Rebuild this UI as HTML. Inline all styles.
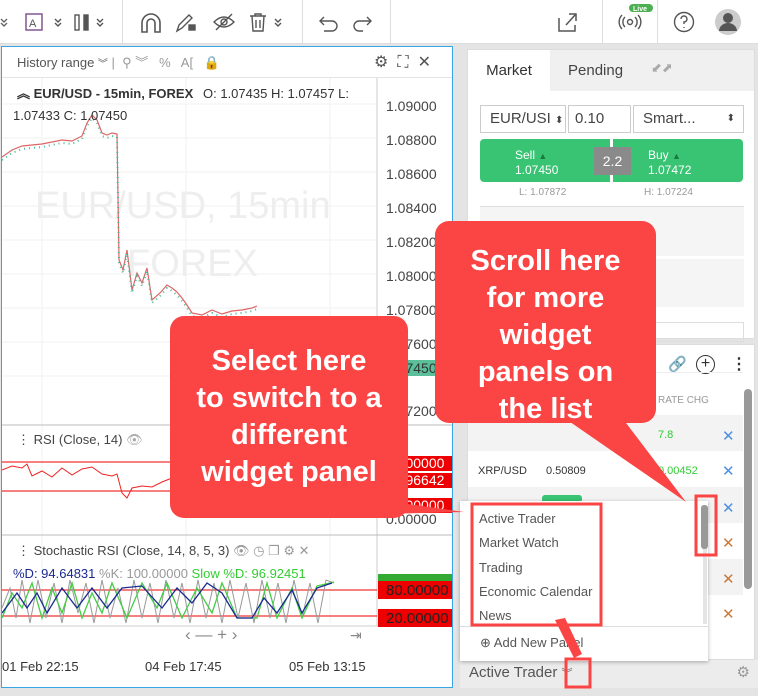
<!DOCTYPE html>
<html><head><meta charset="utf-8"><style>
*{box-sizing:border-box;margin:0;padding:0}
body{width:758px;height:696px;overflow:hidden;background:#e4e4e4;font-family:"Liberation Sans",sans-serif;position:relative;color:#333}
.abs{position:absolute}
.tb{left:0;top:0;width:758px;height:44px;background:#fff;border-bottom:1px solid #ddd}
.vd{position:absolute;top:0;width:1px;height:44px;background:#ddd}
.co{background:#fb4444;color:#fff;font-weight:bold;font-size:29px;line-height:37px;text-align:center;border-radius:14px}
.x{position:absolute;left:254px;font-size:15px}
</style></head><body>
<div class="abs tb">
 <div class="vd" style="left:122px"></div><div class="vd" style="left:302px"></div><div class="vd" style="left:390px"></div><div class="vd" style="left:602px"></div><div class="vd" style="left:657px"></div>
 <svg class="abs" style="left:0;top:0" width="758" height="44" fill="none" stroke="#555" stroke-width="1.4">
  <path d="M1 19l3 3 3-3M1 23l3 3 3-3" stroke="#666"/>
  <rect x="26" y="14" width="16" height="16" stroke="#7a4b8c"/><text x="29" y="27" font-size="11" fill="#555" stroke="none" font-family="Liberation Sans">A</text>
  <path d="M55 19l3 3 3-3M55 23l3 3 3-3"/>
  <rect x="75" y="15" width="4" height="15"/><rect x="84" y="15" width="4" height="15" fill="#555"/>
  <path d="M97 19l3 3 3-3M97 23l3 3 3-3"/>
  <path d="M142 32v-9a9 9 0 0 1 18 0v9h-5v-9a4 4 0 0 0-8 0v9z" stroke-width="1.6"/>
  <path d="M177 31l2-6 10-10 3 3-10 10z"/><rect x="189" y="25" width="6" height="5" fill="#555"/>
  <path d="M214 22q10-10 20 0q-10 10-20 0z"/><circle cx="224" cy="22" r="3"/><path d="M216 30l16-16"/>
  <path d="M250 16h16M255 16v-2h6v2M252 16l1 15h10l1-15M256 20v8M260 20v8"/>
  <path d="M275 19l3 3 3-3M275 23l3 3 3-3"/>
  <path d="M324 17l-4 4 4 4M320 21h12a5 5 0 0 1 0 10h-8"/>
  <path d="M367 17l4 4-4 4M371 21h-12a5 5 0 0 0 0 10h4"/>
  <path d="M559 18v13h16v-6M566 25l9-10M569 14h7v7" stroke-width="1.5"/>
  <circle cx="630" cy="22" r="2.5"/><path d="M625 17a7 7 0 0 0 0 10M635 17a7 7 0 0 1 0 10M622 15a10 10 0 0 0 0 14M638 15a10 10 0 0 1 0 14"/>
  <rect x="629" y="4" width="24" height="8" rx="4" fill="#4caf50" stroke="none"/><text x="633" y="11" font-size="7" font-weight="bold" fill="#fff" stroke="none" font-family="Liberation Sans">Live</text>
  <circle cx="684" cy="22" r="9.5"/><path d="M681 19a3 3 0 1 1 3 3v2M684 27v1"/>
  <circle cx="728" cy="22" r="13" fill="#ccc" stroke="none"/><circle cx="728" cy="18" r="5" fill="#555" stroke="none"/><path d="M719 31a9 8 0 0 1 18 0z" fill="#555" stroke="none"/>
 </svg>
</div>
<div class="abs" style="left:1px;top:46px;width:452px;height:642px;background:#fff;border:1px solid #3aa5e6">
 <div class="abs" style="left:0;top:0;width:450px;height:31px;border-bottom:1px solid #e4e4e4;font-size:13px;color:#555;line-height:31px;padding-left:15px">History range <span style="font-size:10px">︾</span><span style="color:#999">&nbsp;|&nbsp; ⚲ ︾ &nbsp; % &nbsp; A[ &nbsp; 🔒</span>
  <span class="abs" style="right:12px;top:0;font-size:16px;color:#555;letter-spacing:9px">⚙⛶✕</span></div>
</div>
<svg class="abs" style="left:2px;top:78px" width="450" height="600">
 <g stroke="#f2f2f2"><path d="M40 0v545M184 0v545M328 0v545M0 26h375M0 60h375M0 94h375M0 128h375M0 162h375M0 196h375M0 230h375M0 264h375M0 298h375"/></g>
 <path d="M375 0v548M0 548h450" stroke="#ccc"/>
 <path d="M0 347h450M0 457h450" stroke="#bbb"/>
 <text x="33" y="140" font-size="38" fill="#eee" font-family="Liberation Sans">EUR/USD, 15min</text>
 <text x="125" y="198" font-size="38" fill="#eee" font-family="Liberation Sans">FOREX</text>
 <polyline fill="none" stroke="#d66" stroke-width="1.2" points="0,79 10,72 20,68 30,67 40,66 50,64 60,62 70,63 80,58 85,45 90,37 95,42 100,55 105,57 110,55 115,56 117,182 121,192 125,172 130,212 135,195 140,205 145,190 150,222 158,215 165,207 170,210 175,214 180,220 185,227 190,235 200,237 210,232 220,236 230,233 240,232 250,230 255,228"/>
 <polyline fill="none" stroke="#4b9" stroke-width="2" stroke-dasharray="1 4" points="0,82 10,75 20,71 30,70 40,69 50,67 60,65 70,66 80,61 85,48 90,40 95,45 100,58 105,60 110,58 115,59 117,185 121,195 125,175 130,215 135,198 140,208 145,193 150,225 158,218 165,210 170,213 175,217 180,223 185,230 190,238 200,240 210,235 220,239 230,236 240,235 250,233 255,231"/>
 <text x="15" y="20" font-size="13" font-weight="bold" fill="#333" font-family="Liberation Sans">︽ EUR/USD - 15min, FOREX</text>
 <text x="201" y="20" font-size="13" fill="#333" font-family="Liberation Sans">O: 1.07435 H: 1.07457 L:</text>
 <text x="11" y="42" font-size="13" fill="#333" font-family="Liberation Sans">1.07433 C: 1.07450</text>
 <g font-size="14" fill="#444" font-family="Liberation Sans"><text x="384" y="33">1.09000</text><text x="384" y="67">1.08800</text><text x="384" y="101">1.08600</text><text x="384" y="135">1.08400</text><text x="384" y="169">1.08200</text><text x="384" y="203">1.08000</text><text x="384" y="237">1.07800</text><text x="384" y="271">1.07600</text><text x="384" y="338">1.07200</text></g>
 <rect x="376" y="282" width="74" height="16" fill="#5bbf9a"/><text x="384" y="295" font-size="14" fill="#333" font-family="Liberation Sans">1.07450</text>
 <text x="15" y="366" font-size="13" fill="#444" font-family="Liberation Sans">⋮  RSI (Close, 14)  <tspan fill="#aaa">👁</tspan></text>
 <path d="M0 384h375M0 413h375" stroke="#e00"/>
 <polyline fill="none" stroke="#e22" points="0,392 10,388 20,390 25,386 30,398 40,393 50,399 60,390 70,397 80,391 90,389 100,396 110,398 115,396 120,415 125,420 130,410 140,408 150,409 160,404 170,400"/>
 <rect x="376" y="378" width="74" height="15" fill="#e00"/><rect x="376" y="395" width="74" height="15" fill="#e00"/><rect x="376" y="420" width="74" height="15" fill="#e00"/>
 <text x="384" y="390" font-size="14" fill="#fff" font-family="Liberation Sans">80.00000</text><text x="384" y="407" font-size="14" fill="#fff" font-family="Liberation Sans">46.96642</text><text x="384" y="432" font-size="14" fill="#fff" font-family="Liberation Sans">20.00000</text>
 <text x="384" y="446" font-size="14" fill="#444" font-family="Liberation Sans">0.00000</text>
 <text x="15" y="477" font-size="13" fill="#444" font-family="Liberation Sans">⋮  Stochastic RSI (Close, 14, 8, 5, 3) <tspan fill="#999">👁 ◷ ❐ ⚙ ✕</tspan></text>
 <text x="11" y="500" font-size="13" fill="#1a2a90" font-family="Liberation Sans">%D: 94.64831 <tspan fill="#999">%K: 100.00000</tspan> <tspan fill="#3c3">Slow %D: 96.92451</tspan></text>
 <path d="M0 512h375M0 538h375" stroke="#e00"/>
 <polyline fill="none" stroke="#999" points="0,530 8,510 14,540 20,502 28,545 36,502 44,540 52,505 60,545 68,502 76,535 84,505 92,545 100,502 108,540 116,510 124,545 132,502 140,540 148,505 156,545 164,502 172,540 180,505 188,545 196,502 204,540 212,505 220,545 228,502 236,540 244,505 252,545 260,502 268,540 276,505 284,545 292,502 300,540 308,505 316,545 324,502 332,505"/>
 <polyline fill="none" stroke="#4c4" stroke-width="1.3" points="0,540 10,515 20,530 30,505 40,540 50,510 60,535 70,505 80,540 90,515 100,535 110,505 125,540 140,505 155,530 165,505 180,540 195,510 210,535 220,505 235,540 255,540 265,505 275,540 290,510 300,540 315,508 332,504"/>
 <polyline fill="none" stroke="#1a2a90" stroke-width="1.3" points="0,535 15,515 25,530 35,515 45,535 60,510 75,530 90,510 105,530 120,510 140,508 160,530 175,510 190,525 205,505 220,515 235,540 250,540 262,520 275,535 290,512 300,535 315,510 330,505"/>
 <rect x="376" y="496" width="74" height="10" fill="#3a3"/>
 <rect x="376" y="503" width="74" height="18" fill="#e00"/><rect x="376" y="531" width="74" height="18" fill="#e00"/>
 <text x="384" y="517" font-size="15" fill="#222" font-family="Liberation Sans">80.00000</text><text x="384" y="545" font-size="15" fill="#222" font-family="Liberation Sans">20.00000</text>
 <text x="183" y="562" font-size="17" fill="#888" font-family="Liberation Sans">‹  —  +  ›</text><text x="348" y="562" font-size="14" fill="#888" font-family="Liberation Sans">⇥</text>
 <text x="0" y="593" font-size="13" fill="#333" font-family="Liberation Sans">01 Feb 22:15</text><text x="143" y="593" font-size="13" fill="#333" font-family="Liberation Sans">04 Feb 17:45</text><text x="287" y="593" font-size="13" fill="#333" font-family="Liberation Sans">05 Feb 13:15</text>
</svg>
<div class="abs" style="left:467px;top:49px;width:288px;height:290px;background:#fff;border:1px solid #ddd">
 <div class="abs" style="left:0;top:0;width:286px;height:41px;background:#f0f0f0"></div>
 <div class="abs" style="left:0;top:0;width:82px;height:42px;background:#fff;font-size:15px;line-height:42px;text-align:center">Market</div>
 <div class="abs" style="left:100px;top:0;font-size:15px;line-height:42px;color:#444">Pending</div>
 <div class="abs" style="left:183px;top:10px;font-size:13px;color:#aaa">⬋⬈</div>
 <div class="abs" style="left:12px;top:55px;width:86px;height:28px;border:1px solid #ccc;font-size:15px;line-height:26px;padding-left:9px;color:#444">EUR/USI <span style="font-size:10px">⬍</span></div>
 <div class="abs" style="left:100px;top:55px;width:63px;height:28px;border:1px solid #ccc;font-size:15px;line-height:26px;padding-left:6px;color:#444">0.10</div>
 <div class="abs" style="left:165px;top:55px;width:111px;height:28px;border:1px solid #ccc;font-size:15px;line-height:26px;padding-left:9px;color:#444">Smart... <span style="float:right;padding-right:8px;font-size:10px">⬍</span></div>
 <div class="abs" style="left:12px;top:89px;width:130px;height:43px;background:#38c472;border-radius:4px 0 0 4px;color:#fff;font-size:12px;line-height:14px;padding:9px 0 0 35px">Sell <span style="color:#1d7a3f;font-size:9px">▲</span><br>1.07450</div>
 <div class="abs" style="left:145px;top:89px;width:130px;height:43px;background:#38c472;border-radius:0 4px 4px 0;color:#fff;font-size:12px;line-height:14px;padding:9px 0 0 35px">Buy <span style="color:#1d7a3f;font-size:9px">▲</span><br>1.07472</div>
 <div class="abs" style="left:126px;top:97px;width:37px;height:28px;background:#8a8a8a;color:#fff;font-size:14px;line-height:28px;text-align:center">2.2</div>
 <div class="abs" style="left:51px;top:137px;font-size:10px;color:#999">L: 1.07872</div>
 <div class="abs" style="left:176px;top:137px;font-size:10px;color:#999">H: 1.07224</div>
 <div class="abs" style="left:12px;top:156px;width:264px;height:50px;background:#f5f5f5;border-top:1px solid #ddd"></div>
 <div class="abs" style="left:12px;top:209px;width:264px;height:48px;background:#f5f5f5"></div>
 <div class="abs" style="left:12px;top:272px;width:264px;height:20px;border:1px solid #ddd"></div>
</div>
<div class="abs" style="left:467px;top:344px;width:288px;height:316px;background:#fff;border:1px solid #ddd">
 <div class="abs" style="left:200px;top:10px;font-size:15px;color:#4a90e2">🔗</div>
 <div class="abs" style="left:228px;top:10px;width:19px;height:19px;border:1.5px solid #333;border-radius:50%;font-size:16px;line-height:15px;text-align:center">+</div>
 <div class="abs" style="left:263px;top:9px;font-size:16px;font-weight:bold">⋮</div>
 <div class="abs" style="left:0;top:27px;width:275px;height:1px;background:#eee"></div>
 <div class="abs" style="left:190px;top:50px;font-size:10px;color:#999">RATE CHG</div>
 <div class="abs" style="left:0;top:70px;width:275px;height:36px;background:#f3f3f3"></div>
 <div class="abs" style="left:190px;top:84px;font-size:11px;color:#3c3">7.8</div>
 <div class="abs" style="left:10px;top:120px;font-size:11px;color:#333">XRP/USD</div>
 <div class="abs" style="left:78px;top:120px;font-size:11px;color:#333">0.50809</div>
 <div class="abs" style="left:190px;top:120px;font-size:11px;color:#3c3">0.00452</div>
 <div class="abs" style="left:0;top:142px;width:275px;height:36px;background:#f3f3f3"></div>
 <div class="abs" style="left:74px;top:150px;width:40px;height:8px;background:#38c472;border-radius:3px"></div>
 <div class="abs" style="left:0;top:214px;width:275px;height:36px;background:#f3f3f3"></div>
 <div class="x" style="top:82px;color:#4a90e2">✕</div>
 <div class="x" style="top:117px;color:#4a90e2">✕</div>
 <div class="x" style="top:154px;color:#4a90e2">✕</div>
 <div class="x" style="top:189px;color:#c97a3a">✕</div>
 <div class="x" style="top:225px;color:#c97a3a">✕</div>
 <div class="x" style="top:260px;color:#c97a3a">✕</div>
 <div class="abs" style="left:276px;top:44px;width:8px;height:200px;background:#999;border-radius:4px"></div>
</div>
<div class="abs" style="left:460px;top:660px;width:298px;height:28px;background:#ececec;font-size:15px;line-height:26px;color:#555;padding-left:9px">Active Trader <span style="font-size:11px;color:#666">︾</span><span class="abs" style="right:8px;top:0;color:#999">⚙</span></div>
<div class="abs" style="left:0;top:688px;width:758px;height:8px;background:#e4e4e4"></div>
<div class="abs" style="left:460px;top:501px;width:248px;height:160px;background:#fff;box-shadow:0 1px 4px rgba(0,0,0,.3)">
 <div class="abs" style="left:19px;top:6px;font-size:13px;color:#555;line-height:24.3px">Active Trader<br>Market Watch<br>Trading<br>Economic Calendar<br>News</div>
 <div class="abs" style="left:243px;top:8px;width:4px;height:115px;background:#e4e4e4"></div>
 <div class="abs" style="left:0;top:125px;width:248px;height:1px;background:#ddd"></div>
 <div class="abs" style="left:20px;top:134px;font-size:13px;color:#555">⊕ Add New Panel</div>
 <div class="abs" style="left:241px;top:4px;width:7px;height:44px;background:#999;border-radius:3px"></div>
</div>
<svg class="abs" style="left:0;top:0" width="758" height="696">
 <path d="M380 500L464 512L340 515Z" fill="#fb4444"/>
 <path d="M560 415L686 502L620 415Z" fill="#fb4444"/>
 <path d="M555 620L574 658L582 654L565 618Z" fill="#fb4444"/>
 <g fill="none" stroke="#fb4444" stroke-width="3"><rect x="472" y="504" width="129" height="121"/><rect x="696" y="496" width="20" height="59"/><rect x="566" y="659" width="24" height="28"/></g>
</svg>
<div class="abs co" style="left:170px;top:316px;width:238px;height:202px;padding-top:27px">Select here<br>to switch to a<br>different<br>widget panel</div>
<div class="abs co" style="left:435px;top:221px;width:221px;height:202px;padding-top:22px">Scroll here<br>for more<br>widget<br>panels on<br>the list</div>
</body></html>
